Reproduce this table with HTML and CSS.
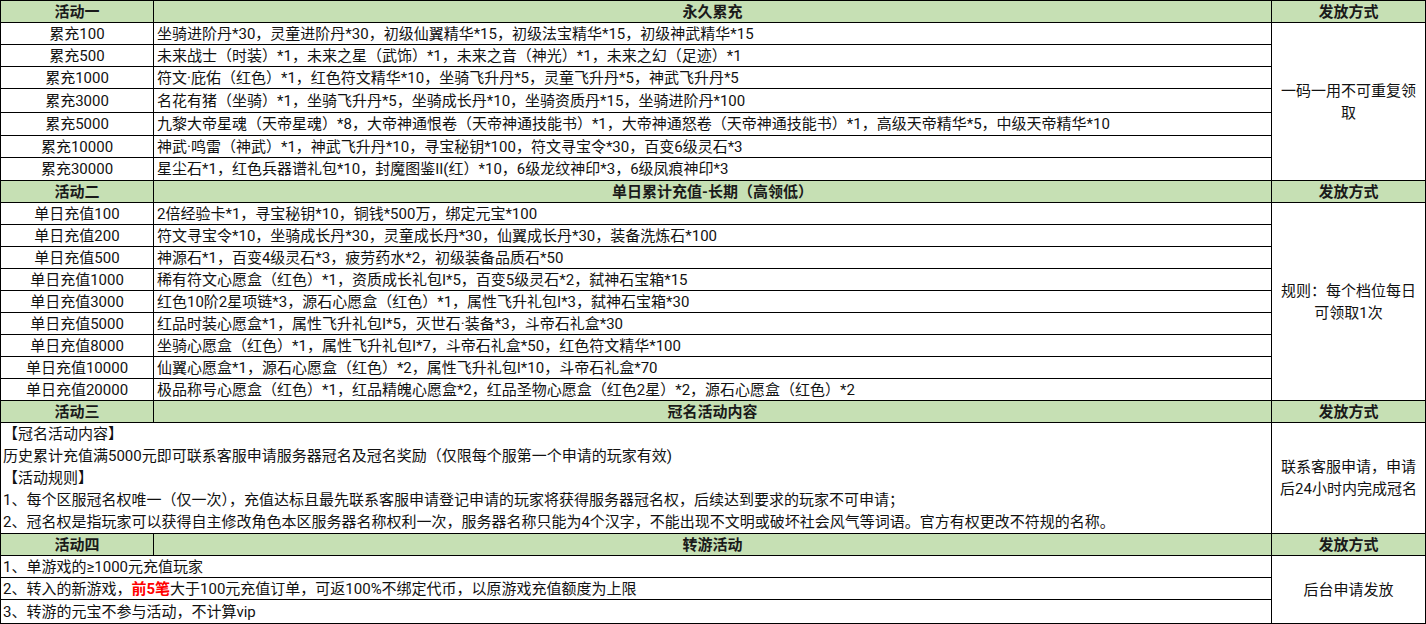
FILE: index.html
```html
<!DOCTYPE html>
<html lang="zh-CN">
<head>
<meta charset="utf-8">
<title>活动</title>
<link rel="stylesheet" href="styles.css">
</head>
<body>
<table class="sheet">
  <colgroup>
    <col class="c-a">
    <col class="c-b">
    <col class="c-c">
  </colgroup>
  <tbody class="sec sec-1">
    <tr class="hd">
      <th>活动一</th>
      <th>永久累充</th>
      <th>发放方式</th>
    </tr>
    <tr class="r22"><td class="lv">累充100</td><td class="it">坐骑进阶丹*30，灵童进阶丹*30，初级仙翼精华*15，初级法宝精华*15，初级神武精华*15</td><td class="way" rowspan="7">一码一用不可重复领取</td></tr>
    <tr class="r22"><td class="lv">累充500</td><td class="it">未来战士（时装）*1，未来之星（武饰）*1，未来之音（神光）*1，未来之幻（足迹）*1</td></tr>
    <tr class="r22"><td class="lv">累充1000</td><td class="it">符文·庇佑（红色）*1，红色符文精华*10，坐骑飞升丹*5，灵童飞升丹*5，神武飞升丹*5</td></tr>
    <tr class="r24"><td class="lv">累充3000</td><td class="it">名花有猪（坐骑）*1，坐骑飞升丹*5，坐骑成长丹*10，坐骑资质丹*15，坐骑进阶丹*100</td></tr>
    <tr class="r23"><td class="lv">累充5000</td><td class="it">九黎大帝星魂（天帝星魂）*8，大帝神通恨卷（天帝神通技能书）*1，大帝神通怒卷（天帝神通技能书）*1，高级天帝精华*5，中级天帝精华*10</td></tr>
    <tr class="r22"><td class="lv">累充10000</td><td class="it">神武·鸣雷（神武）*1，神武飞升丹*10，寻宝秘钥*100，符文寻宝令*30，百变6级灵石*3</td></tr>
    <tr class="r23"><td class="lv">累充30000</td><td class="it">星尘石*1，红色兵器谱礼包*10，封魔图鉴II(红）*10，6级龙纹神印*3，6级凤痕神印*3</td></tr>
  </tbody>
  <tbody class="sec sec-2">
    <tr class="hd">
      <th>活动二</th>
      <th>单日累计充值-长期（高领低）</th>
      <th>发放方式</th>
    </tr>
    <tr class="r22"><td class="lv">单日充值100</td><td class="it">2倍经验卡*1，寻宝秘钥*10，铜钱*500万，绑定元宝*100</td><td class="way" rowspan="9">规则：每个档位每日可领取1次</td></tr>
    <tr class="r22"><td class="lv">单日充值200</td><td class="it">符文寻宝令*10，坐骑成长丹*30，灵童成长丹*30，仙翼成长丹*30，装备洗炼石*100</td></tr>
    <tr class="r22"><td class="lv">单日充值500</td><td class="it">神源石*1，百变4级灵石*3，疲劳药水*2，初级装备品质石*50</td></tr>
    <tr class="r22"><td class="lv">单日充值1000</td><td class="it">稀有符文心愿盒（红色）*1，资质成长礼包I*5，百变5级灵石*2，弑神石宝箱*15</td></tr>
    <tr class="r22"><td class="lv">单日充值3000</td><td class="it">红色10阶2星项链*3，源石心愿盒（红色）*1，属性飞升礼包I*3，弑神石宝箱*30</td></tr>
    <tr class="r22"><td class="lv">单日充值5000</td><td class="it">红品时装心愿盒*1，属性飞升礼包I*5，灭世石·装备*3，斗帝石礼盒*30</td></tr>
    <tr class="r22"><td class="lv">单日充值8000</td><td class="it">坐骑心愿盒（红色）*1，属性飞升礼包I*7，斗帝石礼盒*50，红色符文精华*100</td></tr>
    <tr class="r22"><td class="lv">单日充值10000</td><td class="it">仙翼心愿盒*1，源石心愿盒（红色）*2，属性飞升礼包I*10，斗帝石礼盒*70</td></tr>
    <tr class="r22"><td class="lv">单日充值20000</td><td class="it">极品称号心愿盒（红色）*1，红品精魄心愿盒*2，红品圣物心愿盒（红色2星）*2，源石心愿盒（红色）*2</td></tr>
  </tbody>
  <tbody class="sec sec-3">
    <tr class="hd">
      <th>活动三</th>
      <th>冠名活动内容</th>
      <th>发放方式</th>
    </tr>
    <tr class="r110">
      <td class="para" colspan="2">
        <div class="line">【冠名活动内容】</div>
        <div class="line">历史累计充值满5000元即可联系客服申请服务器冠名及冠名奖励（仅限每个服第一个申请的玩家有效)</div>
        <div class="line">【活动规则】</div>
        <div class="line">1、每个区服冠名权唯一（仅一次），充值达标且最先联系客服申请登记申请的玩家将获得服务器冠名权，后续达到要求的玩家不可申请；</div>
        <div class="line">2、冠名权是指玩家可以获得自主修改角色本区服务器名称权利一次，服务器名称只能为4个汉字，不能出现不文明或破坏社会风气等词语。官方有权更改不符规的名称。</div>
      </td>
      <td class="way">联系客服申请，申请后24小时内完成冠名</td>
    </tr>
  </tbody>
  <tbody class="sec sec-4">
    <tr class="hd">
      <th>活动四</th>
      <th>转游活动</th>
      <th>发放方式</th>
    </tr>
    <tr class="r22"><td class="para" colspan="2">1、单游戏的≥1000元充值玩家</td><td class="way" rowspan="3">后台申请发放</td></tr>
    <tr class="r22"><td class="para" colspan="2">2、转入的新游戏，<b class="hot">前5笔</b>大于100元充值订单，可返100%不绑定代币，以原游戏充值额度为上限</td></tr>
    <tr class="r24"><td class="para" colspan="2">3、转游的元宝不参与活动，不计算vip</td></tr>
  </tbody>
</table>
</body>
</html>
```

FILE: styles.css
```css
html, body {
  margin: 0;
  padding: 0;
  background: #ffffff;
}

body {
  font-family: Roboto, "Noto Sans CJK SC", sans-serif;
  font-size: 15px;
  color: #111111;
}

.sheet {
  border-collapse: collapse;
  table-layout: fixed;
  width: 1425px;
}

.c-a { width: 153px; }
.c-b { width: 1118px; }
.c-c { width: 154px; }

.sheet th,
.sheet td {
  border: 1px solid #000000;
  padding: 0 3px;
  line-height: 20px;
  white-space: nowrap;
  overflow: hidden;
  vertical-align: middle;
}

.hd {
  height: 22px;
}

.hd th {
  background: #c6e0b4;
  font-weight: 700;
  text-align: center;
  color: #1a1a1a;
}

.r22 { height: 22px; }
.r23 { height: 23px; }
.r24 { height: 24px; }
.r110 { height: 110px; }

.lv {
  text-align: center;
}

.it {
  text-align: left;
}

.sheet td.way {
  text-align: center;
  white-space: normal;
  line-height: 22px;
  padding: 0 4px;
}

.sheet td.para {
  text-align: left;
  padding-left: 2px;
}

.line {
  height: 22px;
  line-height: 22px;
}

.hot {
  color: #ff0000;
  font-weight: 700;
}
```
